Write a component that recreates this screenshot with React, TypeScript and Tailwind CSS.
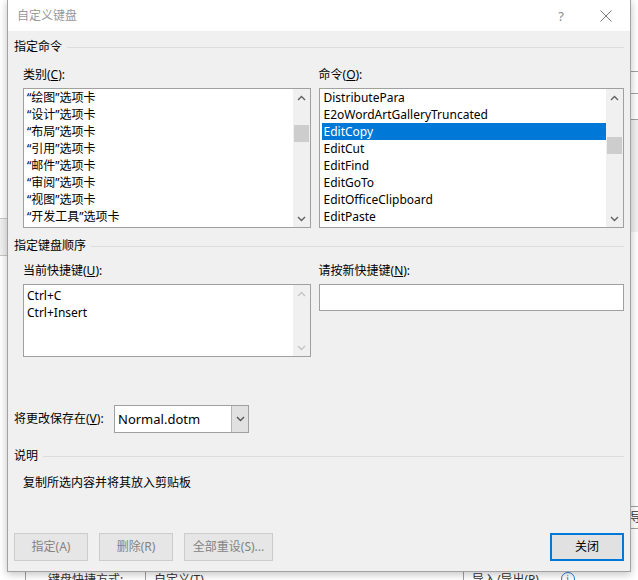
import React from 'react'

const categories = [
    '“绘图”选项卡',
    '“设计”选项卡',
    '“布局”选项卡',
    '“引用”选项卡',
    '“邮件”选项卡',
    '“审阅”选项卡',
    '“视图”选项卡',
    '“开发工具”选项卡',
]

const commands = [
    'DistributePara',
    'E2oWordArtGalleryTruncated',
    'EditCopy',
    'EditCut',
    'EditFind',
    'EditGoTo',
    'EditOfficeClipboard',
    'EditPaste',
]

const Chevron = ({ up, color }: { up?: boolean; color: string }) => (
    <svg width="9" height="6" viewBox="0 0 9 6">
        <path
            d={up ? 'M1 5 L4.5 1.5 L8 5' : 'M1 1 L4.5 4.5 L8 1'}
            fill="none"
            stroke={color}
            strokeWidth="1.4"
        />
    </svg>
)

const ScrollBar = ({ thumb, disabled }: { thumb?: 'left' | 'right'; disabled?: boolean }) => {
    const c = disabled ? '#c4c4c4' : '#606060'
    return (
        <div className="w-[17px] bg-[#f0f0f0] flex flex-col">
            <div className="h-[17px] flex items-center justify-center"><Chevron up color={c} /></div>
            <div className="flex-1">
                {thumb === 'left' && <div className="mt-[19px] mx-[1px] h-[17px] bg-[#cdcdcd]" />}
                {thumb === 'right' && <div className="mt-[31px] mx-[1px] h-[17px] bg-[#cdcdcd]" />}
            </div>
            <div className="h-[17px] flex items-center justify-center"><Chevron color={c} /></div>
        </div>
    )
}

const SectionHeader = ({ text, className }: { text: string; className: string }) => (
    <div className={className}>
        <span>{text}</span>
        <div className="flex-1 h-px bg-[#dcdcdc] ml-[5px]" />
    </div>
)

const Button = ({ children, width, disabled, primary }: { children: React.ReactNode; width: string; disabled?: boolean; primary?: boolean }) => (
    <div
        className={
            primary
                ? 'h-[28px] flex items-center justify-center bg-[#e1e1e1] border-2 border-[#0078d7] text-black ' + width
                : 'h-[28px] flex items-center justify-center bg-[#e6e6e6] border border-[#cccccc] text-[#838383] ' + width
        }
    >
        {children}
    </div>
)

export default function App() {
    return (
        <div className="relative w-[638px] h-[580px] overflow-hidden bg-white text-[12px] leading-[16px] text-black font-[family-name:Noto_Sans,Noto_Sans_CJK_SC,sans-serif]">
            {/* window behind the dialog */}
            <div className="absolute left-0 top-[218px] w-[8px] h-px bg-[#c8c8c8]" />
            <div className="absolute left-0 top-[219px] w-[8px] h-[36px] bg-[#f0f0f0]" />
            <div className="absolute left-0 top-[255px] w-[8px] h-px bg-[#c8c8c8]" />
            <div className="absolute left-[630px] top-[71px] w-[8px] h-px bg-[#a0a0a0]" />
            <div className="absolute left-[630px] top-[93px] w-[8px] h-px bg-[#a0a0a0]" />
            <div className="absolute left-[630px] top-[119px] w-[8px] h-px bg-[#a0a0a0]" />
            <div className="absolute left-[630px] top-[120px] w-[8px] h-[112px] bg-[#f0f0f0]" />
            <div className="absolute left-[630px] top-[506px] w-[8px] h-px bg-[#a0a0a0]" />
            <div className="absolute left-[630px] top-[528px] w-[8px] h-px bg-[#a0a0a0]" />
            <div className="absolute left-[630px] top-[510px] text-[#333]">导</div>
            <div className="absolute left-[25px] top-[566px] w-[196px] h-[20px] border-l border-[#a0a0a0] flex">
                <div className="w-[119px] text-center pt-[6px] text-[#333]">键盘快捷方式:</div>
                <div className="border-l border-[#a0a0a0] pl-[8px] pt-[6px] text-[#333]">自定义(T)...</div>
            </div>
            <div className="absolute left-[463px] top-[566px] h-[20px] border-l border-[#a0a0a0] pl-[8px] pt-[6px] text-[#333] flex gap-[12px]">
                <span>导入/导出(P)...</span>
                <span className="w-[14px] h-[14px] rounded-full border border-[#2b7cd3] text-[#2b7cd3] text-[10px] leading-[12px] text-center">i</span>
            </div>

            {/* dialog */}
            <div className="absolute left-[7px] top-0 w-[624px] h-[572px] bg-[#f0f0f0] border-x border-b border-[#a3a3a3] shadow-[0_2px_8px_rgba(0,0,0,0.25)] flex flex-col">
                {/* title bar */}
                <div className="h-[31px] bg-white flex items-center pl-[9px]">
                    <span className="text-[#999999]">自定义键盘</span>
                    <div className="flex-1" />
                    <span className="text-[#8a8a8a] mr-[36px] text-[13px]">?</span>
                    <svg width="12" height="12" viewBox="0 0 12 12" className="mr-[18px]">
                        <path d="M0.5 0.5 L11.5 11.5 M11.5 0.5 L0.5 11.5" stroke="#777" strokeWidth="1" fill="none" />
                    </svg>
                </div>

                <div className="flex flex-col pl-[6px] pr-[6px]">
                    <SectionHeader text="指定命令" className="mt-[8px] h-[16px] flex items-center" />

                    <div className="mt-[12px] pl-[9px] flex gap-[8px]">
                        <div className="w-[288px] flex flex-col">
                            <div className="h-[16px]">类别(<span className="underline">C</span>):</div>
                            <div className="mt-[5px] h-[140px] flex border border-[#a0a0a0] bg-white">
                                <div className="flex-1 flex flex-col overflow-hidden">
                                    {categories.map((c) => (
                                        <div key={c} className="h-[17px] leading-[17px] px-[3px] whitespace-nowrap">{c}</div>
                                    ))}
                                </div>
                                <ScrollBar thumb="left" />
                            </div>
                        </div>
                        <div className="w-[306px] flex flex-col">
                            <div className="h-[16px]">命令(<span className="underline">O</span>):</div>
                            <div className="mt-[5px] h-[140px] flex border border-[#a0a0a0] bg-white">
                                <div className="flex-1 flex flex-col overflow-hidden pl-[2px]">
                                    {commands.map((c, i) => (
                                        <div
                                            key={c}
                                            className={
                                                i === 2
                                                    ? 'h-[17px] leading-[17px] px-[2px] whitespace-nowrap bg-[#0078d7] text-white'
                                                    : 'h-[17px] leading-[17px] px-[2px] whitespace-nowrap'
                                            }
                                        >
                                            {c}
                                        </div>
                                    ))}
                                </div>
                                <ScrollBar thumb="right" />
                            </div>
                        </div>
                    </div>

                    <SectionHeader text="指定键盘顺序" className="mt-[10px] h-[16px] flex items-center" />

                    <div className="mt-[9px] pl-[9px] flex gap-[8px]">
                        <div className="w-[288px] flex flex-col">
                            <div className="h-[16px]">当前快捷键(<span className="underline">U</span>):</div>
                            <div className="mt-[5px] h-[73px] flex border border-[#a0a0a0] bg-white">
                                <div className="flex-1 flex flex-col pl-[3px] pt-[2px]">
                                    <div className="h-[17px] leading-[17px]">Ctrl+C</div>
                                    <div className="h-[17px] leading-[17px]">Ctrl+Insert</div>
                                </div>
                                <ScrollBar disabled />
                            </div>
                        </div>
                        <div className="w-[306px] flex flex-col">
                            <div className="h-[16px]">请按新快捷键(<span className="underline">N</span>):</div>
                            <div className="mt-[5px] h-[27px] border border-[#a0a0a0] bg-white" />
                        </div>
                    </div>

                    <div className="mt-[48px] h-[28px] flex items-center">
                        <span className="w-[100px]">将更改保存在(<span className="underline">V</span>):</span>
                        <div className="h-[28px] w-[135px] flex border border-[#a0a0a0] bg-white">
                            <div className="flex-1 flex items-center pl-[3px] text-[13px]">Normal.dotm</div>
                            <div className="w-[17px] bg-[#e1e1e1] border-l border-[#b4b4b4] flex items-center justify-center">
                                <Chevron color="#555" />
                            </div>
                        </div>
                    </div>

                    <SectionHeader text="说明" className="mt-[15px] h-[16px] flex items-center" />

                    <div className="mt-[11px] h-[16px] pl-[9px]">复制所选内容并将其放入剪贴板</div>

                    <div className="mt-[42px] flex items-center">
                        <div className="flex gap-[11px]">
                            <Button width="w-[74px]" disabled>指定(A)</Button>
                            <Button width="w-[74px]" disabled>删除(R)</Button>
                            <Button width="w-[89px]" disabled>全部重设(S)...</Button>
                        </div>
                        <div className="flex-1" />
                        <Button width="w-[74px]" primary>关闭</Button>
                    </div>
                </div>
            </div>
        </div>
    )
}
